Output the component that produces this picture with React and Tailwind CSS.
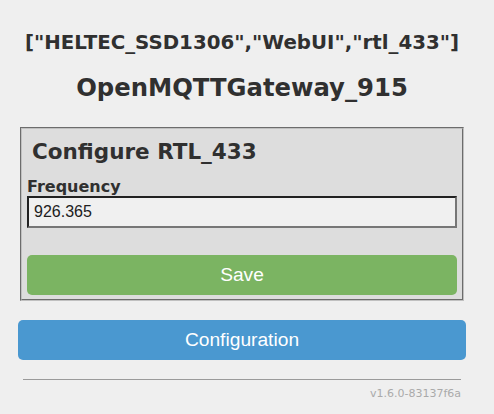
export default function App() {
  return (
    <div className="min-h-screen bg-[#efefef] font-['DejaVu_Sans',sans-serif] text-[#303030]">
      <div className="ml-[18px] w-[448px] pt-[31px]">
        <h3 className="text-center text-[19.8px] leading-[24px] font-bold">
          ["HELTEC_SSD1306","WebUI","rtl_433"]
        </h3>
        <h2 className="mt-[19px] text-center text-[24.3px] leading-[28px] font-bold">
          OpenMQTTGateway_915
        </h2>
        <div className="mt-[25px] mx-[2px] [border:2px_groove_#c0c0c0] bg-[#dddddd] px-[5px] pt-[10px] pb-[4px]">
          <h3 className="pl-[5px] text-[21.5px] leading-[26px] font-bold">Configure RTL_433</h3>
          <label className="mt-[12px] block text-[16px] leading-[19px] font-bold">Frequency</label>
          <input
            className="block w-full h-[32px] [border:2px_inset_#767676] bg-[#f0f0f0] px-[5px] font-['Liberation_Sans',sans-serif] text-[16px] text-[#202020] outline-none"
            defaultValue="926.365"
          />
          <button className="mt-[27px] block w-full h-[40px] rounded-[5px] bg-[#7bb462] text-white text-[19.2px] font-['Liberation_Sans',sans-serif]">
            Save
          </button>
        </div>
        <button className="mt-[19px] block w-full h-[40px] rounded-[5px] bg-[#4a98d0] text-white text-[19.2px] font-['Liberation_Sans',sans-serif]">
          Configuration
        </button>
        <div className="mt-[19px] mx-[5px] border-t border-[#9a9a9a]" />
        <div className="mt-[7px] mx-[5px] text-right text-[11px] leading-[13px] text-[#aaaaaa]">
          v1.6.0-83137f6a
        </div>
      </div>
    </div>
  );
}
